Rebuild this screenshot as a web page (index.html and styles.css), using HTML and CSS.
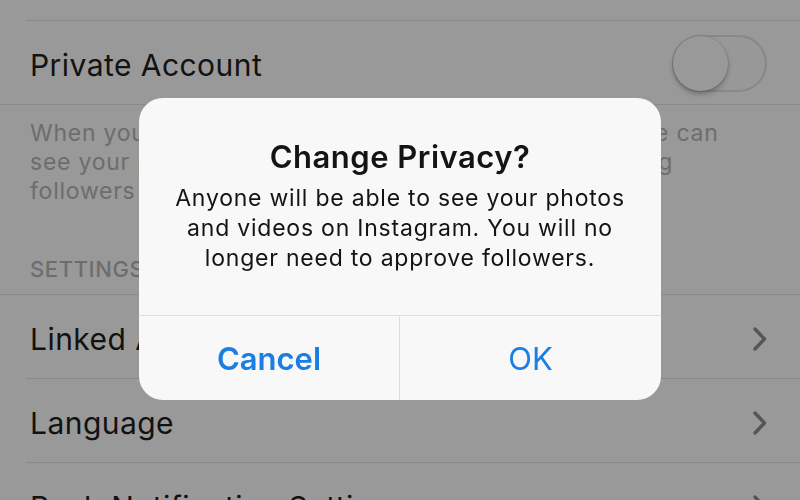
FILE: index.html
```html
<!DOCTYPE html>
<html lang="en">
<head>
<meta charset="utf-8">
<title>Change Privacy</title>
<link rel="stylesheet" href="styles.css">
</head>
<body>
<div class="screen">
  <div class="cell cell-spacer"></div>
  <div class="cell cell-last">
    <span class="label">Private Account</span>
    <span class="switch"><span class="knob"></span></span>
  </div>
  <div class="note">
    <p class="note-text">When your account is private, only people you approve can see your photos and videos on Instagram. Your existing followers won't be affected.</p>
    <div class="section-title">SETTINGS</div>
  </div>
  <div class="group">
    <div class="cell">
      <span class="label">Linked Accounts</span>
      <svg class="chevron" viewBox="0 0 14 24" width="14" height="24"><path d="M2 2 L11.5 12 L2 22" fill="none" stroke="currentColor" stroke-width="3.4" stroke-linecap="round" stroke-linejoin="round"/></svg>
    </div>
    <div class="cell">
      <span class="label">Language</span>
      <svg class="chevron" viewBox="0 0 14 24" width="14" height="24"><path d="M2 2 L11.5 12 L2 22" fill="none" stroke="currentColor" stroke-width="3.4" stroke-linecap="round" stroke-linejoin="round"/></svg>
    </div>
    <div class="cell">
      <span class="label">Push Notification Settings</span>
      <svg class="chevron" viewBox="0 0 14 24" width="14" height="24"><path d="M2 2 L11.5 12 L2 22" fill="none" stroke="currentColor" stroke-width="3.4" stroke-linecap="round" stroke-linejoin="round"/></svg>
    </div>
  </div>
</div>

<div class="overlay">
  <div class="alert" role="alertdialog" aria-labelledby="alert-title">
    <div class="alert-body">
      <h2 class="alert-title" id="alert-title">Change Privacy?</h2>
      <p class="alert-message">Anyone will be able to see your photos<br>and videos on Instagram. You will no<br>longer need to approve followers.</p>
    </div>
    <div class="alert-actions">
      <button class="alert-btn alert-btn-cancel">Cancel</button>
      <button class="alert-btn">OK</button>
    </div>
  </div>
</div>
</body>
</html>
```

FILE: styles.css
```css
html, body {
  margin: 0;
  padding: 0;
  height: 100%;
  overflow: hidden;
  background: #ffffff;
  font-family: "Inter", "Liberation Sans", sans-serif;
}

.screen {
  display: flex;
  flex-direction: column;
  background: #ffffff;
}

.cell {
  display: flex;
  align-items: center;
  justify-content: space-between;
  height: 84px;
  box-sizing: border-box;
  padding: 4px 33px 0 30px;
  background: linear-gradient(#e4e4e4, #e4e4e4) no-repeat 26px 100% / calc(100% - 26px) 1px;
  color: #1e1e1e;
}

.cell-spacer {
  height: 21px;
  padding: 0;
}

.cell-last {
  background: linear-gradient(#e4e4e4, #e4e4e4) no-repeat 0 100% / 100% 1px;
}

.label {
  font-size: 30px;
  letter-spacing: 0.45px;
  white-space: nowrap;
}

.switch {
  display: flex;
  width: 95px;
  height: 57px;
  box-sizing: border-box;
  border: 2px solid #e3e3e3;
  border-radius: 29px;
  background: #fdfdfd;
  margin-bottom: 4px;
}

.knob {
  width: 55px;
  height: 55px;
  margin: -1px 0 0 -1px;
  border-radius: 50%;
  background: #ffffff;
  box-shadow: 0 3px 5px rgba(0, 0, 0, 0.28), 0 0 0 1px rgba(0, 0, 0, 0.06);
}

.note {
  padding: 14px 31px 13px 30px;
  color: #b6b6b6;
}

.note-text {
  margin: 0;
  font-size: 23px;
  line-height: 29px;
  letter-spacing: 0.75px;
  padding-right: 30px;
}

.section-title {
  margin-top: 51px;
  font-size: 22px;
  line-height: 24px;
  letter-spacing: 0.6px;
  font-weight: 500;
}

.group {
  border-top: 1px solid #e4e4e4;
}

.chevron {
  color: #8e8e8e;
  flex: none;
}

/* modal */
.overlay {
  position: fixed;
  inset: 0;
  background: rgba(0, 0, 0, 0.4);
  display: flex;
  align-items: center;
  justify-content: center;
  padding-bottom: 2px;
  box-sizing: border-box;
}

.alert {
  width: 522px;
  background: #f8f8f8;
  border-radius: 24px;
  overflow: hidden;
  text-align: center;
}

.alert-body {
  padding: 40px 10px 42px;
  color: #141414;
}

.alert-title {
  margin: 0;
  font-size: 31px;
  line-height: 38px;
  font-weight: 600;
  letter-spacing: 0.5px;
}

.alert-message {
  margin: 7px 0 0;
  font-size: 23px;
  line-height: 30px;
  font-weight: 400;
  letter-spacing: 0.78px;
}

.alert-actions {
  display: grid;
  grid-template-columns: 1fr 1fr;
  border-top: 1px solid #dedede;
}

.alert-btn {
  height: 84px;
  border: 0;
  background: transparent;
  font-family: inherit;
  font-size: 31px;
  color: #1a7ee4;
  padding: 0;
}

.alert-btn-cancel {
  font-weight: 600;
  border-right: 1px solid #dedede;
}
```
